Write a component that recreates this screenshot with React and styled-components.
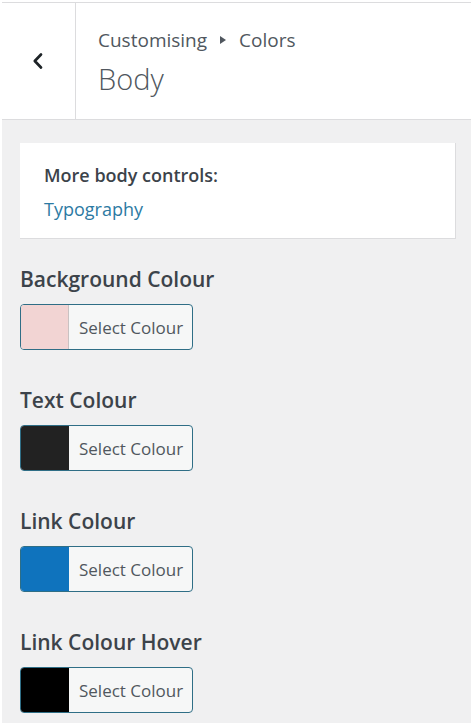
import React from "react";
import styled, { createGlobalStyle } from "styled-components";

const Global = createGlobalStyle`
  html, body { margin: 0; padding: 0; background: #fff; }
  body { font-family: "Open Sans", "Noto Sans", sans-serif; }
  * { box-sizing: border-box; }
`;

const Panel = styled.div`
  margin: 2px 3px 0 2px;
  height: 721px;
  background: #f0f0f1;
  display: flex;
  flex-direction: column;
`;

const Header = styled.div`
  display: flex;
  height: 118px;
  background: #fff;
  border-top: 1px solid #dcdcde;
  border-bottom: 1px solid #dcdcde;
`;

const BackButton = styled.button`
  width: 74px;
  border: none;
  border-right: 1px solid #dcdcde;
  background: #fff;
  display: flex;
  align-items: center;
  justify-content: center;
  padding: 0 2px 0 0;
  cursor: pointer;
`;

const Titles = styled.div`
  display: flex;
  flex-direction: column;
  padding: 22px 0 0 22px;
`;

const Crumb = styled.div`
  font-size: 19px;
  color: #50575e;
  line-height: 30px;
  display: flex;
  align-items: center;
  gap: 13px;
`;

const Arrow = styled.span`
  display: inline-block;
  width: 0;
  height: 0;
  border-top: 4px solid transparent;
  border-bottom: 4px solid transparent;
  border-left: 6px solid #50575e;
`;

const Title = styled.div`
  font-size: 29px;
  font-weight: 300;
  color: #50575e;
  line-height: 40px;
  margin-top: 4px;
`;

const Content = styled.div`
  padding: 23px 15px 0 18px;
  display: flex;
  flex-direction: column;
`;

const Card = styled.div`
  background: #fff;
  height: 96px;
  border-right: 1px solid #dcdcde;
  border-bottom: 1px solid #dcdcde;
  padding: 19px 24px 0 24px;
  display: flex;
  flex-direction: column;
  gap: 8px;
`;

const CardTitle = styled.div`
  font-size: 18px;
  font-weight: 600;
  color: #3c434a;
  line-height: 26px;
`;

const CardLink = styled.a`
  font-size: 18px;
  color: #2c7aa3;
  line-height: 26px;
  text-decoration: none;
`;

const Groups = styled.div`
  display: flex;
  flex-direction: column;
  gap: 38px;
  margin-top: 28px;
`;

const Group = styled.div`
  display: flex;
  flex-direction: column;
  gap: 13px;
`;

const Label = styled.div`
  font-size: 21px;
  font-weight: 600;
  color: #3c434a;
  line-height: 24px;
`;

const ColorButton = styled.button`
  width: 173px;
  height: 46px;
  padding: 0;
  border: 1px solid #2f6e86;
  border-radius: 4px;
  background: #f6f7f7;
  display: flex;
  align-items: stretch;
  overflow: hidden;
  cursor: pointer;
  font-family: inherit;
`;

const Swatch = styled.span`
  width: 48px;
  background: ${(p) => p.$color};
  border-right: 1px solid ${(p) => (p.$light ? "#c9c2c2" : "transparent")};
`;

const ButtonText = styled.span`
  flex: 1;
  display: flex;
  align-items: center;
  padding-left: 10px;
  font-size: 17px;
  color: #50575e;
  white-space: nowrap;
`;

const items = [
  { label: "Background Colour", color: "#f2d4d3", light: true },
  { label: "Text Colour", color: "#222222" },
  { label: "Link Colour", color: "#0f73bd" },
  { label: "Link Colour Hover", color: "#000000" },
];

export default function App() {
  return (
    <>
      <Global />
      <Panel>
        <Header>
          <BackButton aria-label="Back">
            <svg width="14" height="22" viewBox="0 0 14 22">
              <path d="M10 4.5 L3.8 11 L10 17.5" fill="none" stroke="#1d2327" strokeWidth="2.7" strokeLinecap="round" strokeLinejoin="round" />
            </svg>
          </BackButton>
          <Titles>
            <Crumb>
              <span>Customising</span>
              <Arrow />
              <span>Colors</span>
            </Crumb>
            <Title>Body</Title>
          </Titles>
        </Header>
        <Content>
          <Card>
            <CardTitle>More body controls:</CardTitle>
            <CardLink href="#">Typography</CardLink>
          </Card>
          <Groups>
            {items.map((it) => (
              <Group key={it.label}>
                <Label>{it.label}</Label>
                <ColorButton>
                  <Swatch $color={it.color} $light={it.light} />
                  <ButtonText>Select Colour</ButtonText>
                </ColorButton>
              </Group>
            ))}
          </Groups>
        </Content>
      </Panel>
    </>
  );
}
